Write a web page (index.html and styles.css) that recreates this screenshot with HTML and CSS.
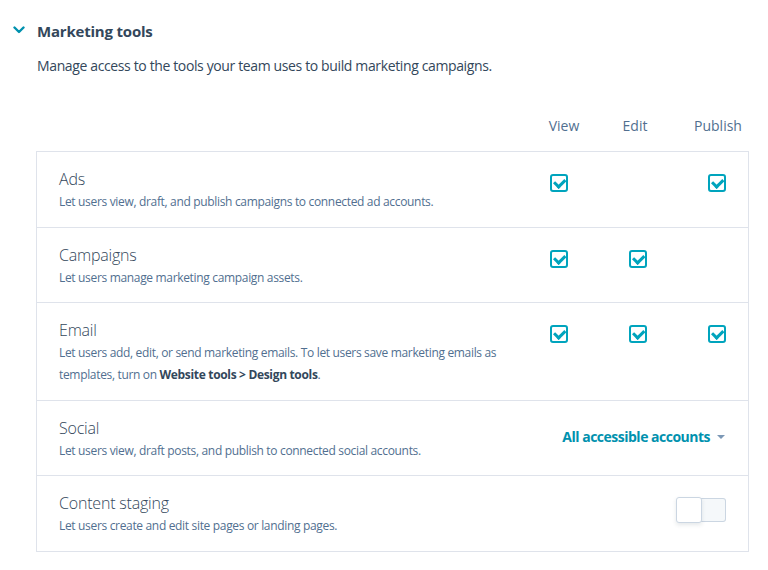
FILE: index.html
```html
<!DOCTYPE html>
<html>
<head>
<meta charset="utf-8">
<link rel="stylesheet" href="styles.css">
</head>
<body>
<section class="section">
  <header class="section-head">
    <svg class="chev" width="12" height="8" viewBox="0 0 12 8"><path d="M1.5 1.5 L6 6 L10.5 1.5" fill="none" stroke="#0091ae" stroke-width="2.4" stroke-linecap="round" stroke-linejoin="round"/></svg>
    <h2 class="section-title">Marketing tools</h2>
  </header>
  <p class="section-desc">Manage access to the tools your team uses to build marketing campaigns.</p>

  <div class="cols">
    <span></span>
    <span class="col-label col-view">View</span>
    <span class="col-label col-edit">Edit</span>
    <span class="col-label col-pub">Publish</span>
  </div>

  <div class="table">
    <div class="row">
      <div class="info">
        <div class="name">Ads</div>
        <div class="desc">Let users view, draft, and publish campaigns to connected ad accounts.</div>
      </div>
      <span class="cb c1"></span>
      <span class="c2"></span>
      <span class="cb c3"></span>
    </div>
    <div class="row">
      <div class="info">
        <div class="name">Campaigns</div>
        <div class="desc">Let users manage marketing campaign assets.</div>
      </div>
      <span class="cb c1"></span>
      <span class="cb c2"></span>
      <span class="c3"></span>
    </div>
    <div class="row">
      <div class="info">
        <div class="name">Email</div>
        <div class="desc">Let users add, edit, or send marketing emails. To let users save marketing emails as templates, turn on <b>Website tools &gt; Design tools</b>.</div>
      </div>
      <span class="cb c1"></span>
      <span class="cb c2"></span>
      <span class="cb c3"></span>
    </div>
    <div class="row">
      <div class="info">
        <div class="name">Social</div>
        <div class="desc">Let users view, draft posts, and publish to connected social accounts.</div>
      </div>
      <div class="dropdown">All accessible accounts <span class="caret"></span></div>
    </div>
    <div class="row">
      <div class="info">
        <div class="name">Content staging</div>
        <div class="desc">Let users create and edit site pages or landing pages.</div>
      </div>
      <div class="toggle"><span class="knob"></span><span class="track"></span></div>
    </div>
  </div>
</section>
</body>
</html>
```

FILE: styles.css
```css
* { box-sizing: border-box; }
body {
  margin: 0;
  background: #fff;
  font-family: "Open Sans", "Noto Sans", sans-serif;
  color: #33475b;
}
.section {
  padding: 19px 20px 0 13px;
  width: 768px;
}
.section-head {
  display: flex;
  align-items: center;
  gap: 12px;
  height: 24px;
}
.chev { display: block; margin-top: -2px; }
.section-title {
  margin: 0;
  font-size: 15px;
  font-weight: 700;
  line-height: 24px;
  letter-spacing: -0.2px;
  color: #33475b;
}
.section-desc {
  margin: 12px 0 0 24px;
  font-size: 14px;
  line-height: 22px;
  letter-spacing: -0.37px;
  color: #33475b;
}
.cols {
  display: grid;
  grid-template-columns: 1fr 60px 60px 60px;
  column-gap: 19px;
  margin: 39px 1px 0 23px;
  font-size: 14px;
  line-height: 20px;
  color: #516f90;
}
.col-label { text-align: center; }
.col-view { padding-left: 10px; }
.col-edit { padding-right: 6px; }
.col-pub { padding-left: 2px; white-space: nowrap; }
.table {
  margin: 15px 0 0 23px;
  border: 1px solid #dfe3eb;
  width: 713px;
}
.row {
  display: grid;
  grid-template-columns: 1fr 60px 60px 60px;
  column-gap: 19px;
  padding: 15px 1px 13.6px 22px;
  border-top: 1px solid #dfe3eb;
  align-items: start;
}
.row:first-child { border-top: none; }
.info { min-width: 0; }
.name {
  font-size: 16px;
  font-weight: 300;
  line-height: 24px;
  letter-spacing: -0.2px;
  color: #33475b;
}
.desc {
  font-size: 12px;
  line-height: 22px;
  letter-spacing: -0.33px;
  color: #516f90;
  max-width: 445px;
}
.desc b { color: #33475b; font-weight: 700; }
.cb {
  justify-self: center;
  width: 18px;
  height: 18px;
  margin-top: 7px;
  border: 2px solid #00a4bd;
  border-radius: 3px;
  background: #fff;
  position: relative;
}
.cb::after {
  content: "";
  position: absolute;
  left: 3px;
  top: 0px;
  width: 5px;
  height: 8px;
  border-right: 3px solid #00a4bd;
  border-bottom: 3px solid #00a4bd;
  transform: rotate(45deg) translate(1px, 0px);
  transform-origin: center;
}
.dropdown {
  grid-column: 2 / 5;
  justify-self: end;
  margin: 11px 22px 0 0;
  font-size: 14px;
  font-weight: 700;
  letter-spacing: -0.5px;
  color: #0091ae;
  line-height: 20px;
  white-space: nowrap;
  display: flex;
  align-items: center;
  gap: 7px;
}
.caret {
  width: 0; height: 0;
  border-left: 4px solid transparent;
  border-right: 4px solid transparent;
  border-top: 4px solid #7c98b6;
}
.toggle {
  grid-column: 2 / 5;
  justify-self: end;
  margin: 6px 21px 0 0;
  display: flex;
  width: 50px;
  height: 26px;
}
.knob {
  width: 26px;
  height: 26px;
  background: #fff;
  border: 1px solid #cbd6e2;
  border-radius: 3px;
  box-shadow: 0 2px 4px rgba(45, 62, 80, 0.12);
  position: relative;
  z-index: 1;
}
.track {
  width: 25px;
  height: 24px;
  margin: 1px 0 0 -1px;
  background: #f5f8fa;
  border: 1px solid #cbd6e2;
  border-left: none;
  border-radius: 0 3px 3px 0;
}
```
